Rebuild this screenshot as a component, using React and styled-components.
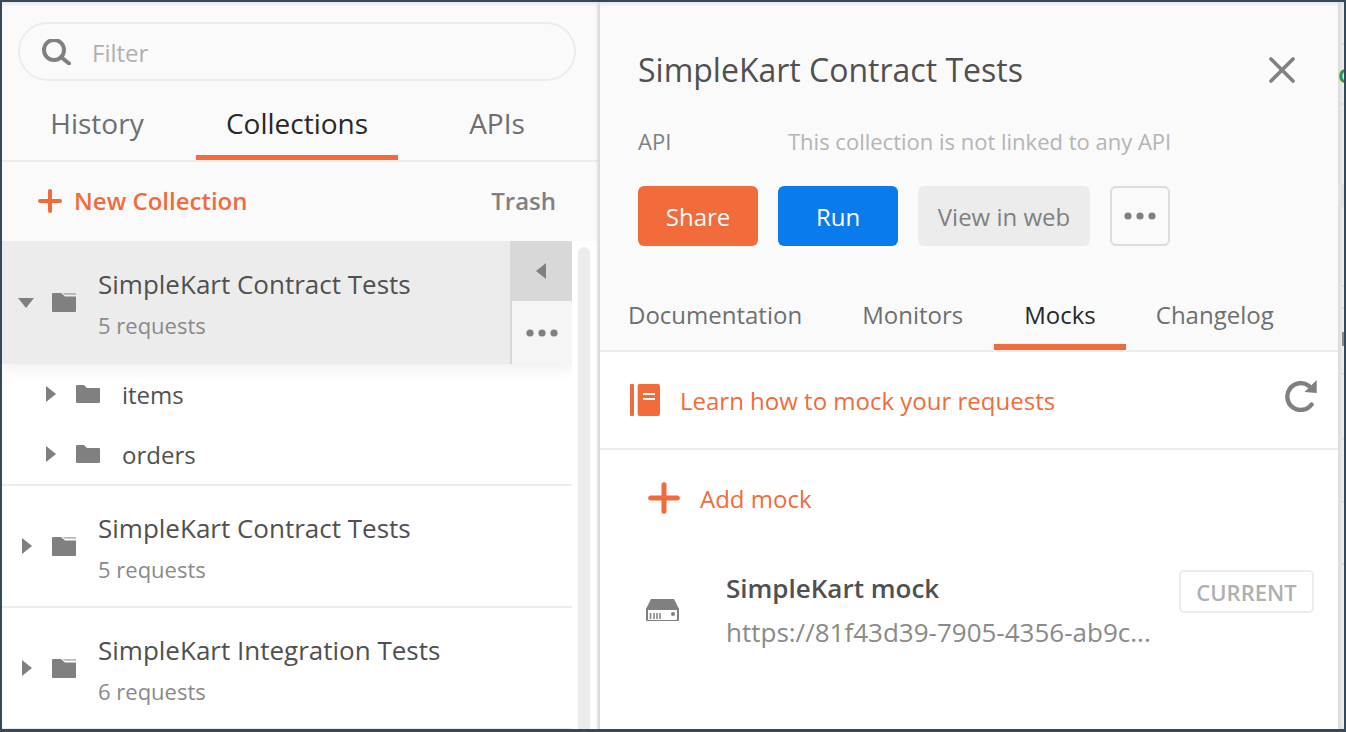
import React from 'react';
import styled, { createGlobalStyle, css } from 'styled-components';

const Global = createGlobalStyle`
  html, body { margin: 0; padding: 0; background: #34495a; overflow: hidden; }
  * { box-sizing: border-box; }
  #root { width: 1346px; height: 732px; }
`;
const ORANGE = '#f26b3a';
const Frame = styled.div`
  width: 1346px; height: 732px; display: flex; padding: 2px 2px 3px 2px; overflow: hidden;
  font-family: "Open Sans", sans-serif; color: #505050; background: #34495a;
`;
const Sidebar = styled.aside`
  width: 595px; flex: none; background: #fafafa; display: flex; flex-direction: column; overflow: hidden;
  box-shadow: inset 0 5px 5px -4px rgba(0,0,0,.12);
`;
const SearchWrap = styled.div`padding: 20px 21px 0 16px;`;
const Search = styled.div`
  height: 59px; border: 2px solid #ececec; border-radius: 30px; display: flex; align-items: center; padding-left: 22px; gap: 21px;
`;
const Placeholder = styled.span`font-size: 24px; color: #b0b0b0; padding-top: 2px;`;
const SideTabs = styled.div`
  height: 81px; display: flex; border-bottom: 2px solid #ececec;
`;
const SideTab = styled.div`
  width: ${p => p.$w}px; margin-left: ${p => p.$ml || 0}px; text-align: center; font-size: 28px; line-height: 38px; padding-top: 23px; height: 79px;
  color: ${p => (p.$active ? '#282828' : '#6f6f6f')};
  border-bottom: 5px solid ${p => (p.$active ? ORANGE : 'transparent')};
`;
const Actions = styled.div`
  height: 79px; display: flex; align-items: center; justify-content: space-between; padding: 0 41px 2px 36px;
`;
const NewCollection = styled.div`
  display: flex; align-items: center; gap: 12px; color: ${ORANGE}; font-size: 24px; font-weight: 600;
`;
const Trash = styled.div`color: #808080; font-size: 24px; font-weight: 600;`;
const ListArea = styled.div`flex: 1; display: flex; background: #fff; min-height: 0;`;
const List = styled.div`width: 570px; flex: none; overflow: hidden;`;
const Track = styled.div`
  width: 12px; margin: 6px 0 0 6px; background: #ebebeb; border-radius: 6px 6px 0 0;
`;
const CollectionRow = styled.div`
  height: ${p => p.$h}px; display: flex; align-items: center; position: relative;
  background: ${p => (p.$selected ? '#ececec' : '#fff')};
  border-bottom: ${p => (p.$divider ? '2px solid #ececec' : 'none')};
  ${p => p.$selected && css`box-shadow: 0 6px 12px rgba(0,0,0,.06); z-index: 1;`}
`;
const Caret = styled.div`width: 32px; margin-left: ${p => p.$ml}px; display: flex; justify-content: center; flex: none;`;
const FolderSlot = styled.div`width: ${p => p.$w}px; margin-left: ${p => p.$ml}px; display: flex; flex: none;`;
const Info = styled.div`display: flex; flex-direction: column; margin-top: 1px;`;
const Title = styled.div`font-size: 26px; line-height: 36px; color: #505050;`;
const Count = styled.div`font-size: 22px; line-height: 30px; color: #8a8a8a; margin-top: 8px;`;
const SideActions = styled.div`
  position: absolute; right: 0; top: 0; bottom: 0; width: 62px; border-left: 2px solid #d8d8d8; display: flex; flex-direction: column;
`;
const CollapseBtn = styled.div`height: 60px; background: #d8d8d8; display: flex; align-items: center; justify-content: center; padding-right: 2px;`;
const MoreBtn = styled.div`flex: 1; background: #f5f5f5; display: flex; align-items: center; justify-content: center;`;
const FolderRow = styled.div`height: 60px; display: flex; align-items: center;`;
const FolderName = styled.span`font-size: 24px; color: #505050; margin-left: 2px;`;

const Gutter = styled.div`width: 3px; flex: none; background: linear-gradient(to right, #eee, #e2e2e2);`;
const Detail = styled.main`width: 738px; flex: none; background: #fff; display: flex; flex-direction: column; box-shadow: -3px 0 4px rgba(0,0,0,.05);`;
const DetailHead = styled.div`background: #fafafa; border-bottom: 2px solid #ececec; height: 350px; flex: none; display: flex; flex-direction: column; box-shadow: inset 0 5px 5px -4px rgba(0,0,0,.12);`;
const HeadTop = styled.div`display: flex; justify-content: space-between; align-items: center; padding: 45px 43px 0 38px; height: 90px;`;
const DetailTitle = styled.h1`margin: 0; font-size: 32px; font-weight: 400; color: #505050; line-height: 50px;`;
const ApiRow = styled.div`display: flex; font-size: 22px; line-height: 30px; margin-top: 34px; padding-left: 38px;`;
const ApiLabel = styled.span`width: 150px; color: #808080;`;
const ApiNote = styled.span`color: #b4b4b4;`;
const Buttons = styled.div`display: flex; gap: 20px; padding-left: 38px; margin-top: 30px;`;
const Btn = styled.div`
  height: 60px; width: ${p => p.$w}px; border-radius: 6px; display: flex; align-items: center; justify-content: center; font-size: 24px;
  background: ${p => p.$bg}; color: ${p => p.$fg};
  ${p => p.$outline && css`border: 2px solid #dcdcdc;`}
`;
const DetailTabs = styled.div`display: flex; margin-top: 39px; padding-left: 28px; height: 65px;`;
const DetailTab = styled.div`
  font-size: 24px; line-height: 60px; height: 65px; margin-right: ${p => p.$mr}px;
  padding: 0 ${p => p.$pad || 0}px;
  color: ${p => (p.$active ? '#282828' : '#6f6f6f')};
  border-bottom: 6px solid ${p => (p.$active ? ORANGE : 'transparent')};
`;
const LearnRow = styled.div`
  height: 98px; flex: none; border-bottom: 2px solid #ececec; display: flex; align-items: center; padding: 0 21px 0 30px;
`;
const LearnText = styled.span`font-size: 24px; color: ${ORANGE}; margin-left: 20px; flex: 1;`;
const Refresh = styled.svg`margin-bottom: 9px;`;
const AddRow = styled.div`display: flex; align-items: center; margin-top: 31px; padding-left: 48px; height: 34px; gap: 20px;`;
const AddText = styled.span`font-size: 24px; color: ${ORANGE};`;
const MockRow = styled.div`display: flex; margin-top: 55px; padding-left: 46px; position: relative;`;
const MockIcon = styled.div`width: 80px; flex: none; padding-top: 29px;`;
const MockInfo = styled.div`display: flex; flex-direction: column;`;
const MockName = styled.div`font-size: 26px; font-weight: 600; line-height: 36px; color: #505050;`;
const MockUrl = styled.div`font-size: 26px; line-height: 34px; color: #8a8a8a; margin-top: 9px;`;
const Badge = styled.div`
  position: absolute; right: 24px; top: 0; width: 135px; height: 43px; border: 2px solid #ececec; border-radius: 5px; font-size: 22px; font-weight: 600; color: #b0b0b0;
  display: flex; align-items: center; justify-content: center;
`;
const Backdrop = styled.div`
  flex: 1; background: #f1f1f1; position: relative; overflow: hidden; box-shadow: inset 3px 0 4px rgba(0,0,0,.1);
`;
const Peek = styled.span`position: absolute; left: 0; top: 61px; font-size: 20px; font-weight: 700; line-height: 26px; color: #2a9a3c;`;
const Tick = styled.i`position: absolute; left: 0; right: 0; top: ${p => p.$t}px; height: 2px; background: #e0e0e0;`;
const Band = styled.i`position: absolute; left: 0; right: 0; top: 182px; height: 23px; background: #e2e2e2;`;
const Mark = styled.i`position: absolute; right: 0; top: 330px; width: 2px; height: 14px; background: #8a8a8a;`;

const Plus = ({ size = 24, w = 4 }) => (
  <svg width={size} height={size} viewBox="0 0 24 24"><path d="M12 2v20M2 12h20" stroke={ORANGE} strokeWidth={w * 24 / size} strokeLinecap="round" /></svg>
);
const TriRight = () => <svg width="10" height="16" viewBox="0 0 10 16"><path d="M0 0l10 8-10 8z" fill="#808080" /></svg>;
const TriDown = () => <svg width="16" height="10" viewBox="0 0 16 10"><path d="M0 0h16l-8 10z" fill="#808080" /></svg>;
const TriLeft = () => <svg width="10" height="16" viewBox="0 0 10 16"><path d="M10 0L0 8l10 8z" fill="#808080" /></svg>;
const CollectionFolder = () => (
  <svg width="24" height="19" viewBox="0 0 24 19">
    <path d="M1 0h8l4 3.4h11V18a1 1 0 0 1-1 1H1a1 1 0 0 1-1-1V1a1 1 0 0 1 1-1z" fill="#808080" />
    <path d="M10.6 0H24v1.8H12.8z" fill="#808080" opacity=".55" />
  </svg>
);
const PlainFolder = () => (
  <svg width="24" height="18" viewBox="0 0 24 18"><path d="M1 0h7l3 3h12a1 1 0 0 1 1 1v13a1 1 0 0 1-1 1H1a1 1 0 0 1-1-1V1a1 1 0 0 1 1-1z" fill="#808080" /></svg>
);
const Dots = ({ c = '#808080' }) => (
  <svg width="32" height="8" viewBox="0 0 32 8"><circle cx="4" cy="4" r="3.6" fill={c} /><circle cx="16" cy="4" r="3.6" fill={c} /><circle cx="28" cy="4" r="3.6" fill={c} /></svg>
);

const Collection = ({ title, count, selected, open, h, divider }) => (
  <CollectionRow $selected={selected} $h={h} $divider={divider}>
    <Caret $ml={open ? 8 : 9}>{open ? <TriDown /> : <TriRight />}</Caret>
    <FolderSlot $ml={open ? 10 : 9} $w={46}><CollectionFolder /></FolderSlot>
    <Info>
      <Title>{title}</Title>
      <Count>{count}</Count>
    </Info>
    {selected && (
      <SideActions>
        <CollapseBtn><TriLeft /></CollapseBtn>
        <MoreBtn><Dots /></MoreBtn>
      </SideActions>
    )}
  </CollectionRow>
);
const Folder = ({ name }) => (
  <FolderRow>
    <Caret $ml={33}><TriRight /></Caret>
    <FolderSlot $ml={9} $w={44}><PlainFolder /></FolderSlot>
    <FolderName>{name}</FolderName>
  </FolderRow>
);

export default function App() {
  return (
    <Frame>
      <Global />
      <Sidebar>
        <SearchWrap>
          <Search>
            <svg width="29" height="26" viewBox="0 0 29 26"><circle cx="12" cy="11" r="10" fill="none" stroke="#808080" strokeWidth="4" /><path d="M19 18l8 6.5" stroke="#808080" strokeWidth="4" strokeLinecap="round" /></svg>
            <Placeholder>Filter</Placeholder>
          </Search>
        </SearchWrap>
        <SideTabs>
          <SideTab $w={190}>History</SideTab>
          <SideTab $w={202} $ml={4} $active>Collections</SideTab>
          <SideTab $w={198}>APIs</SideTab>
        </SideTabs>
        <Actions>
          <NewCollection><Plus size={24} w={4} />New Collection</NewCollection>
          <Trash>Trash</Trash>
        </Actions>
        <ListArea>
          <List>
            <Collection selected open h={123} title="SimpleKart Contract Tests" count="5 requests" />
            <Folder name="items" />
            <Folder name="orders" />
            <CollectionRow $h={2} $divider />
            <Collection h={122} divider title="SimpleKart Contract Tests" count="5 requests" />
            <Collection h={122} divider title="SimpleKart Integration Tests" count="6 requests" />
          </List>
          <Track />
        </ListArea>
      </Sidebar>
      <Gutter />
      <Detail>
        <DetailHead>
          <HeadTop>
            <DetailTitle>SimpleKart Contract Tests</DetailTitle>
            <svg width="26" height="26" viewBox="0 0 26 26"><path d="M2 2l22 22M24 2L2 24" stroke="#808080" strokeWidth="3.6" strokeLinecap="round" /></svg>
          </HeadTop>
          <ApiRow><ApiLabel>API</ApiLabel><ApiNote>This collection is not linked to any API</ApiNote></ApiRow>
          <Buttons>
            <Btn $w={120} $bg="#f26b3a" $fg="#fff">Share</Btn>
            <Btn $w={120} $bg="#097bed" $fg="#fff">Run</Btn>
            <Btn $w={172} $bg="#ececec" $fg="#808080">View in web</Btn>
            <Btn $w={60} $bg="transparent" $fg="#808080" $outline><Dots /></Btn>
          </Buttons>
          <DetailTabs>
            <DetailTab $mr={60}>Documentation</DetailTab>
            <DetailTab $mr={31}>Monitors</DetailTab>
            <DetailTab $mr={30} $pad={30} $active>Mocks</DetailTab>
            <DetailTab $mr={0}>Changelog</DetailTab>
          </DetailTabs>
        </DetailHead>
        <LearnRow>
          <svg width="30" height="32" viewBox="0 0 30 32"><rect x="0" y="0" width="4" height="32" rx="1" fill={ORANGE} /><rect x="7.7" y="0" width="22.3" height="32" rx="2" fill={ORANGE} /><path d="M13 9h12v2H13zM13 14h12v2H13z" fill="#fff" /></svg>
          <LearnText>Learn how to mock your requests</LearnText>
          <Refresh width="32" height="32" viewBox="0 0 32 32"><path d="M26.5 24.5A13.4 13.4 0 1 1 24 6" fill="none" stroke="#808080" strokeWidth="4.4" strokeLinecap="round" /><path d="M31.7 0v13L19.5 12z" fill="#808080" /></Refresh>
        </LearnRow>
        <AddRow><Plus size={32} w={5} /><AddText>Add mock</AddText></AddRow>
        <MockRow>
          <MockIcon>
            <svg width="33" height="22" viewBox="0 0 33 22"><path d="M5 0h23l5 10H0z" fill="#808080"/><path d="M1 10h31v10a2 2 0 0 1-2 2H3a2 2 0 0 1-2-2z" fill="#fff" stroke="#808080" strokeWidth="2"/><path d="M4.5 14v6M8 14v6M11 14v6M14 14v6" stroke="#808080" strokeWidth="1.5"/><circle cx="27" cy="15" r="2" fill="#808080"/></svg>
          </MockIcon>
          <MockInfo>
            <MockName>SimpleKart mock</MockName>
            <MockUrl>https://81f43d39-7905-4356-ab9c...</MockUrl>
          </MockInfo>
          <Badge>CURRENT</Badge>
        </MockRow>
      </Detail>
      <Backdrop>
        <Peek>G</Peek>
        <Band />
        <Mark />
        <Tick $t={41} /><Tick $t={101} /><Tick $t={283} /><Tick $t={305} />
        <Tick $t={371} /><Tick $t={436} /><Tick $t={499} /><Tick $t={561} />
      </Backdrop>
    </Frame>
  );
}
